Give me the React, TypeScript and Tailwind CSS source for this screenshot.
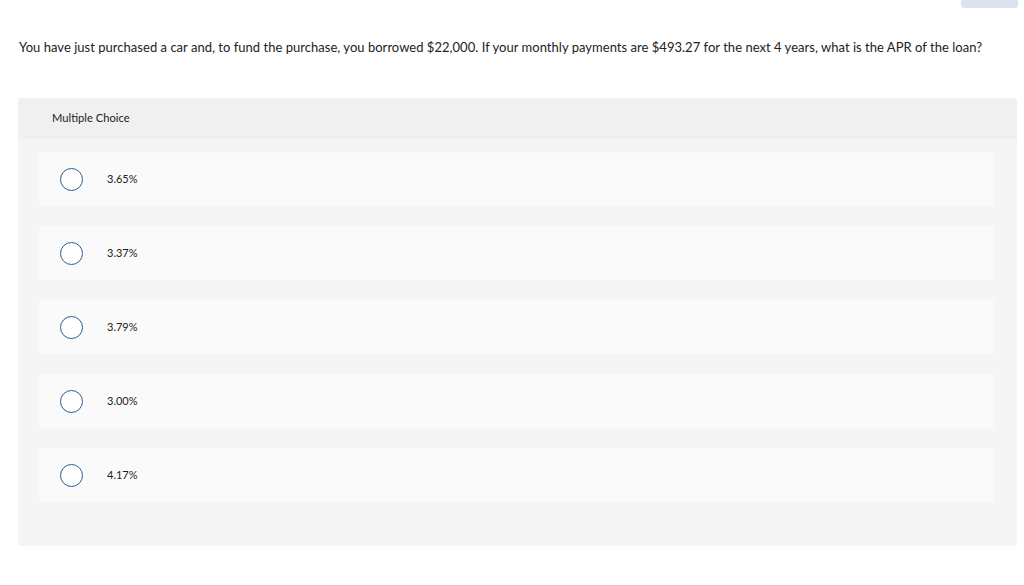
import React from 'react';

const options = ['3.65%', '3.37%', '3.79%', '3.00%', '4.17%'];

export default function App() {
  return (
    <div
      className="relative min-h-[585px] w-full bg-white text-[#1a1a1a]"
      style={{ fontFamily: 'Lato, "Open Sans", sans-serif' }}
    >
      {/* top-right tab */}
      <div className="absolute right-[6px] top-0 h-[8px] w-[57px] rounded-b-[3px] bg-[#dae3ee]" />

      <div className="px-[18px] pt-[39px]">
        <p className="pl-[1px] text-[13px] leading-[16px] tracking-[0.025px] text-[#222]">
          You have just purchased a car and, to fund the purchase, you borrowed $22,000. If your monthly payments are $493.27 for the next 4 years, what is the APR of the loan?
        </p>

        <div className="mt-[43px] w-[999px] overflow-hidden rounded-[3px] bg-[#f5f5f5]">
          {/* Header */}
          <div className="flex h-[41px] items-center bg-[#f0f0f0] pl-[34px] text-[11.2px] text-[#222]">
            Multiple Choice
          </div>

          {/* Options */}
          <div className="flex flex-col gap-[20px] px-[21px] pb-[44px] pt-[13px]">
            {options.map((opt) => (
              <label
                key={opt}
                className="flex h-[54px] w-[955px] items-center rounded-[3px] bg-[#fafafa]"
              >
                <span className="ml-[21px] h-[23px] w-[23px] rounded-full border border-[#2b5b95] bg-white" />
                <span className="ml-[24px] text-[11px] text-[#222]">{opt}</span>
              </label>
            ))}
          </div>
        </div>
      </div>
    </div>
  );
}
